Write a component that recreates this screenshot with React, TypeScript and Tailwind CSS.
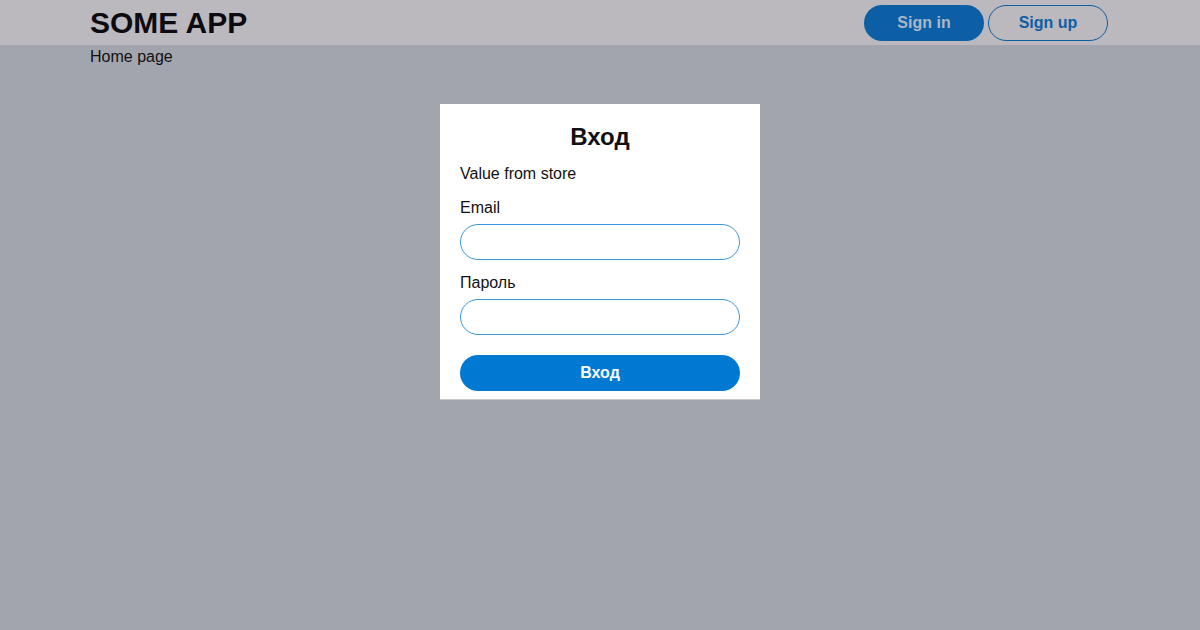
import React from "react";

const font = { fontFamily: '"Liberation Sans", Arial, sans-serif' };

function Field({ label, type }: { label: string; type: string }) {
  return (
    <label className="flex flex-col">
      <span className="text-[16px] leading-[18px] text-[#111]">{label}</span>
      <input
        type={type}
        className="mt-[7px] h-[36px] w-full rounded-full border border-[#3a96dd] bg-white px-4 outline-none"
      />
    </label>
  );
}

export default function App() {
  return (
    <div
      className="relative min-h-[630px] w-full bg-[#a2a5ad] text-[#111]"
      style={font}
    >
      <header className="h-[45px] bg-[#bbb9be]">
        <div className="mx-auto flex h-full w-[1020px] items-center justify-between">
          <h1 className="text-[30px] font-bold leading-none text-[#0d0b10]">
            SOME APP
          </h1>
          <div className="flex items-center gap-[4px] pr-[2px]">
            <button className="h-[36px] w-[120px] rounded-full bg-[#0c5fa5] text-[16px] font-bold text-[#a9b7c9]">
              Sign in
            </button>
            <button className="h-[36px] w-[120px] rounded-full border border-[#0c5fa5] text-[16px] font-bold text-[#0c5fa5]">
              Sign up
            </button>
          </div>
        </div>
      </header>

      <main className="mx-auto w-[1020px] pt-[3px]">
        <p className="text-[16px] leading-[18px]">Home page</p>
      </main>

      <div className="absolute inset-x-0 top-[104px] flex justify-center">
        <div className="w-[320px] bg-white px-[20px] pb-[8px] pt-[19px] shadow-[0_1px_0_#c9c9cc]">
          <h2 className="text-center text-[24px] font-bold leading-[28px]">
            Вход
          </h2>
          <p className="mt-[14px] text-[16px] leading-[18px]">
            Value from store
          </p>
          <div className="mt-[16px] flex flex-col gap-[14px]">
            <Field label="Email" type="email" />
            <Field label="Пароль" type="password" />
          </div>
          <button className="mt-[20px] h-[36px] w-full rounded-full bg-[#0079d3] text-[16px] font-bold text-white">
            Вход
          </button>
        </div>
      </div>
    </div>
  );
}
